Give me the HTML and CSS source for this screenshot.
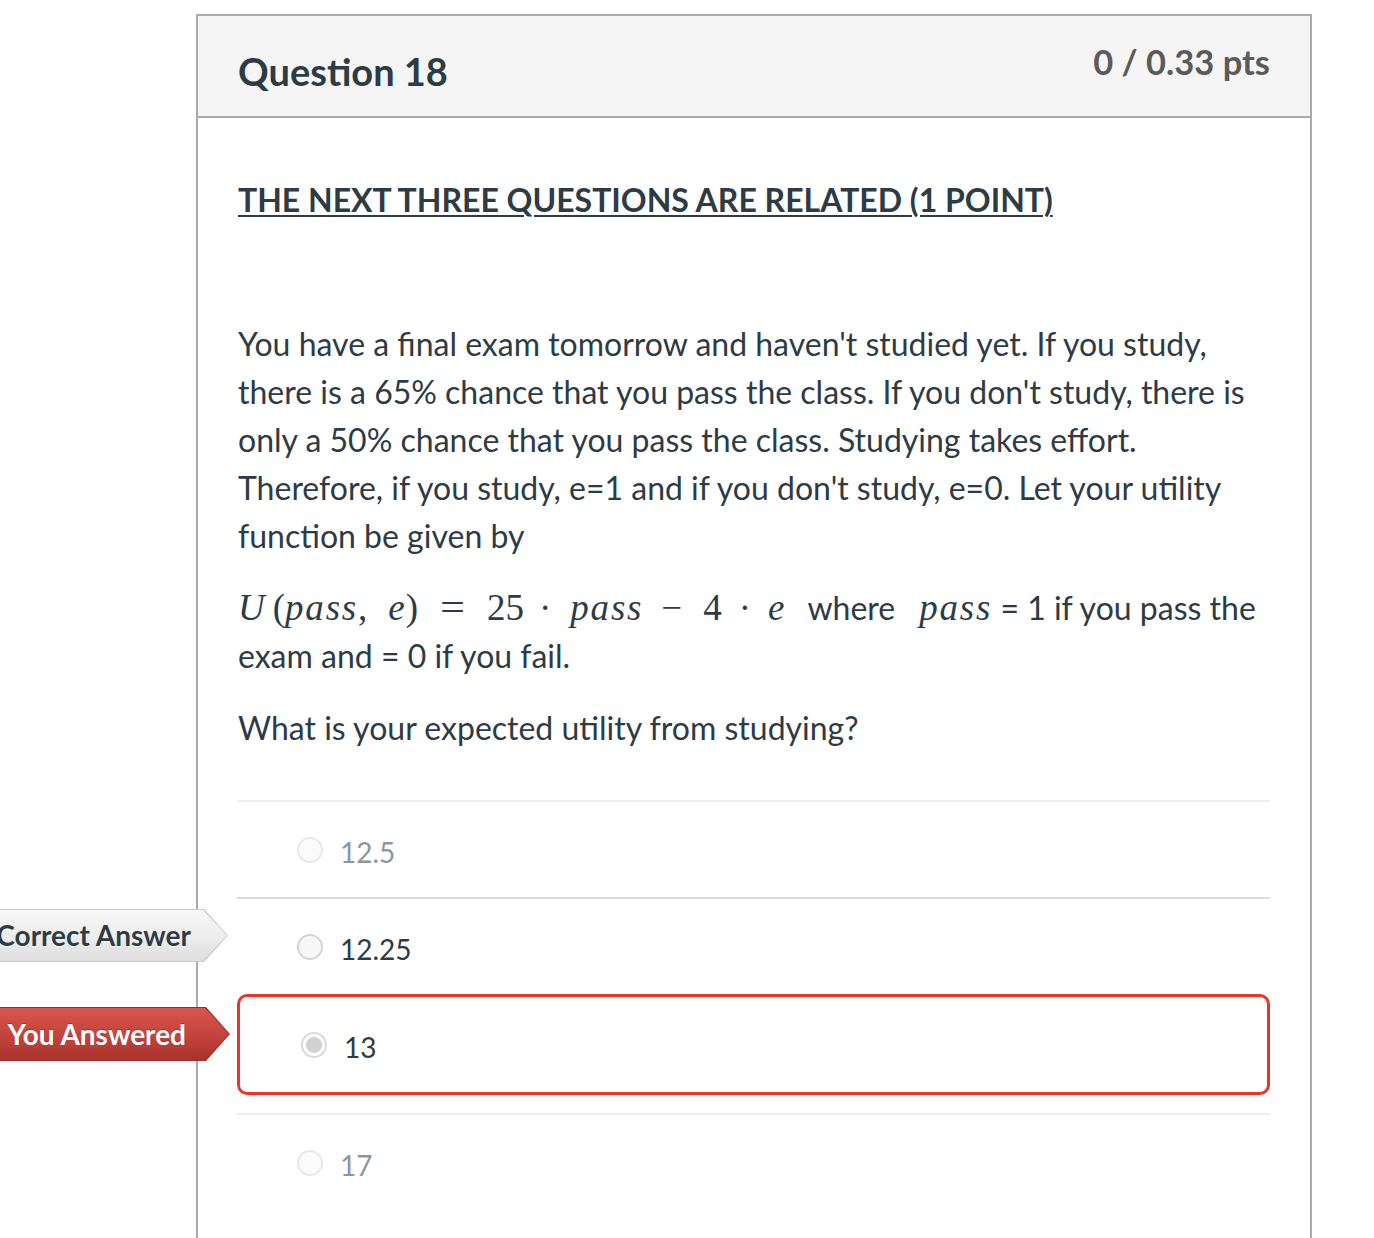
FILE: index.html
```html
<!DOCTYPE html>
<html lang="en">
<head>
<meta charset="utf-8">
<title>Question 18</title>
<link rel="stylesheet" href="styles.css">
</head>
<body>
<div class="question">
  <div class="q-header">
    <h2 class="q-name">Question 18</h2>
    <span class="q-pts">0 / 0.33 pts</span>
  </div>
  <div class="q-body">
    <p class="q-title"><u>THE NEXT THREE QUESTIONS ARE RELATED (1 POINT)</u></p>
    <p class="q-text">You have a final exam tomorrow and haven't studied yet. If you study, there is a 65% chance that you pass the class. If you don't study, there is only a 50% chance that you pass the class. Studying takes effort. Therefore, if you study, e=1 and if you don't study, e=0. Let your utility function be given by</p>
    <p class="q-text"><span class="math"><i class="mi mi-u">U</i><span class="mo m-lp">(</span><i class="mi mi-pass">pass</i><span class="mo">,</span><i class="mi m-e1">e</i><span class="mo m-rp">)</span><span class="mo m-eq">=</span><span class="mn m-25">25</span><span class="mo m-dot1">·</span><i class="mi mi-pass m-pass2">pass</i><span class="mo m-minus">−</span><span class="mn m-4">4</span><span class="mo m-dot2">·</span><i class="mi m-e2">e</i></span><span class="m-where">where</span><i class="mi mi-pass m-pass3">pass</i> = 1 if you pass the exam and = 0 if you fail.</p>
    <p class="q-text q-ask">What is your expected utility from studying?</p>

    <div class="answers">
      <div class="answer muted">
        <span class="radio"></span><span class="answer-text">12.5</span>
      </div>
      <div class="answer correct">
        <div class="ribbon ribbon-correct"><span>Correct Answer</span></div>
        <span class="radio"></span><span class="answer-text">12.25</span>
      </div>
      <div class="answer selected">
        <div class="ribbon ribbon-wrong"><span>You Answered</span></div>
        <span class="radio radio-checked"></span><span class="answer-text">13</span>
      </div>
      <div class="answer muted">
        <span class="radio"></span><span class="answer-text">17</span>
      </div>
    </div>
  </div>
</div>
</body>
</html>
```

FILE: styles.css
```css
html, body {
  margin: 0;
  padding: 0;
  background: #ffffff;
}

body {
  font-family: Lato, "Open Sans", "Liberation Sans", sans-serif;
  color: #2d3b45;
  overflow: hidden;
}

.question {
  box-sizing: border-box;
  width: 1116px;
  margin: 14px 0 0 196px;
  border: 2px solid #aaaaaa;
  border-bottom: none;
  min-height: 1300px;
  background: #ffffff;
}

.q-header {
  display: flex;
  justify-content: space-between;
  align-items: flex-start;
  height: 100px;
  padding: 0 40px;
  background: #f5f5f5;
  border-bottom: 2px solid #aaaaaa;
}

.q-name {
  margin: 33px 0 0;
  font-size: 38px;
  line-height: 1.2;
  font-weight: 700;
  color: #2d3b45;
}

.q-pts {
  margin-top: 25px;
  font-size: 34.5px;
  line-height: 1.2;
  font-weight: 700;
  color: #5a5a5a;
}

.q-body {
  padding: 0 40px;
}

.q-title {
  margin: 63px 0 101px;
  font-size: 32px;
  line-height: 38px;
  font-weight: 700;
  color: #2d3b45;
}

.q-title u {
  text-decoration-thickness: 2px;
  text-underline-offset: 3px;
}

.q-text {
  margin: 0 0 24px;
  font-size: 32px;
  line-height: 48px;
}

.q-ask {
  margin-bottom: 48px;
}

/* math */
.math,
.mi,
.mo,
.mn {
  font-family: "Liberation Serif", "Times New Roman", serif;
  font-size: 37px;
}

.mi {
  font-style: italic;
}

.mo, .mn {
  font-style: normal;
}

.mi-pass { letter-spacing: 1.8px; }
.m-lp { margin-left: 8px; }
.m-e1 { margin-left: 21px; }
.m-rp { margin-left: 1px; }
.m-eq { margin-left: 24px; display: inline-block; transform: scaleX(1.2); }
.m-25 { margin-left: 24px; }
.m-dot1 { margin-left: 15px; }
.m-pass2 { margin-left: 19px; }
.m-minus { margin-left: 18px; }
.m-4 { margin-left: 21px; }
.m-dot2 { margin-left: 17px; }
.m-e2 { margin-left: 17px; }
.m-where { margin-left: 23px; margin-right: 24px; }

/* answers */
.answers {
  margin-left: -1px;
}

.answer {
  position: relative;
  display: flex;
  align-items: center;
  height: 95px;
  padding-left: 60px;
  border-top: 2px solid #eeeeee;
}

.answer.correct {
  border-top-color: #dcdcdc;
}

.answer.selected {
  height: 95px;
  border: 3px solid #ea3528;
  border-radius: 10px;
  padding-left: 61px;
  margin-bottom: 18px;
}

.radio {
  box-sizing: border-box;
  width: 26px;
  height: 26px;
  border-radius: 50%;
  border: 2px solid #d4d4d4;
  background: #f7f7f7;
  flex: none;
}

.muted .radio {
  border-color: #e8e8e8;
  background: #fbfbfb;
}

.radio-checked {
  border: 2px solid #dadada;
  background: radial-gradient(circle, #d2d2d2 0, #d2d2d2 7.5px, #ffffff 8.5px);
}

.answer-text {
  margin-left: 17px;
  font-size: 28px;
  line-height: 42px;
  color: #2d3b45;
  padding-top: 4px;
}

.muted .answer-text {
  color: #8b969e;
}

/* ribbons */
.ribbon {
  position: absolute;
  top: 10px;
  right: calc(100% + 9px);
  width: 300px;
  height: 53px;
  clip-path: polygon(0 0, calc(100% - 24px) 0, 100% 50%, calc(100% - 24px) 100%, 0 100%);
}

.ribbon::before {
  content: "";
  position: absolute;
  top: 1px;
  left: 1px;
  right: 1px;
  bottom: 1px;
  clip-path: polygon(0 0, calc(100% - 24px) 0, 100% 50%, calc(100% - 24px) 100%, 0 100%);
}

.ribbon span {
  position: relative;
  display: block;
  text-align: right;
  padding-right: 37px;
  font-size: 28px;
  line-height: 53px;
  font-weight: 700;
  white-space: nowrap;
}

.ribbon-correct {
  background: #cacaca;
}

.ribbon-correct::before {
  background: linear-gradient(#f8f8f8, #ececec 55%, #dedede);
}

.ribbon-correct span {
  color: #2d3b45;
  text-shadow: 0 1px 0 #ffffff;
}

.ribbon-wrong {
  top: 10px;
  right: calc(100% + 10px);
  height: 54px;
  background: #9e2d27;
}

.ribbon-wrong::before {
  background: linear-gradient(#d8564e, #c2433b 55%, #a8332c);
}

.ribbon-wrong span {
  color: #ffffff;
  line-height: 54px;
  padding-right: 44px;
  text-shadow: 0 -1px 0 rgba(0, 0, 0, 0.25);
}
```
